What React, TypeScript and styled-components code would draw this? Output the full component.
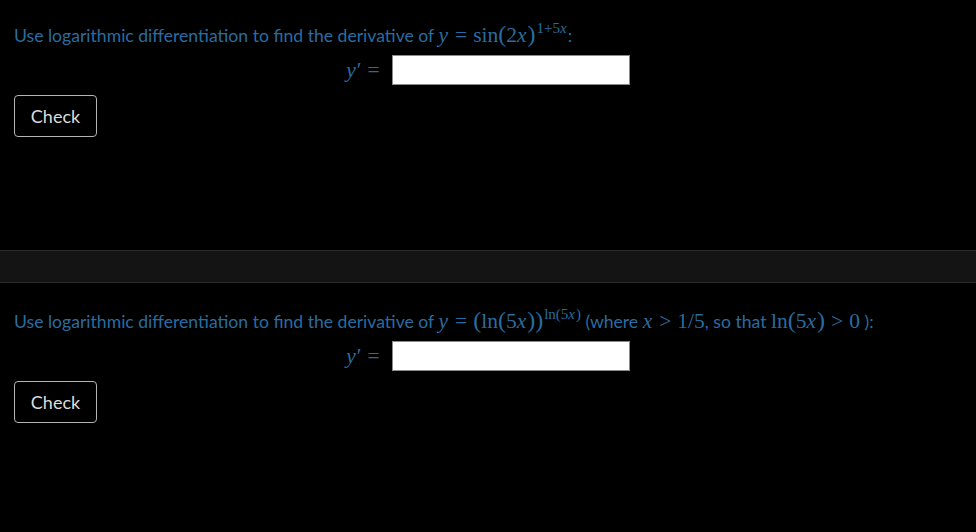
import React from 'react';
import styled, { createGlobalStyle } from 'styled-components';

const GlobalStyle = createGlobalStyle`
  html, body {
    margin: 0;
    padding: 0;
    background: #000;
  }
  body {
    font-family: Lato, "Open Sans", sans-serif;
  }
`;

const Page = styled.div`
  width: 976px;
  height: 532px;
  overflow: hidden;
  background: #000;
`;

const Problem = styled.section<{ $top: number; $height: number }>`
  height: ${(p) => p.$height}px;
  box-sizing: border-box;
  padding: ${(p) => p.$top}px 14px 0;
`;

const Question = styled.p`
  margin: 0;
  height: 24px;
  line-height: 24px;
  font-size: 17.6px;
  color: #2a6ca1;
  white-space: nowrap;
`;

const Math = styled.span`
  font-family: "Liberation Serif", "DejaVu Serif", serif;
  font-size: 21.5px;
`;

const V = styled.i`
  font-style: italic;
  margin-right: 1px;
`;

const Op = styled.span`
  margin: 0 6px;
`;

const Sup = styled.sup`
  font-size: 15px;
  vertical-align: 9px;
  line-height: 0;
  margin-left: 1px;
`;

const Paren = styled.span`
  font-size: 24px;
`;

const Display = styled.div`
  margin-top: 9px;
  display: flex;
  justify-content: center;
  align-items: center;
  gap: 6px;
  height: 30px;
`;

const Lhs = styled.span`
  font-family: "Liberation Serif", "DejaVu Serif", serif;
  font-size: 21.5px;
  color: #2a6ca1;
`;

const Answer = styled.input`
  width: 238px;
  height: 30px;
  box-sizing: border-box;
  border: 1px solid #8a8a8a;
  background: #fff;
  margin: 0;
  padding: 0 6px;
`;

const CheckButton = styled.button`
  margin-top: 10px;
  width: 83px;
  height: 42px;
  box-sizing: border-box;
  background: #000;
  color: #dcdcdc;
  border: 1px solid #b4b4b4;
  border-radius: 4px;
  font-family: Lato, "Open Sans", sans-serif;
  font-size: 18px;
  cursor: pointer;
`;

const Divider = styled.div`
  height: 33px;
  box-sizing: border-box;
  background: #141414;
  border-top: 1px solid #2c2c2c;
  border-bottom: 1px solid #2c2c2c;
`;

const App = () => (
  <Page>
    <GlobalStyle />
    <Problem $top={22} $height={250}>
      <Question>
        Use logarithmic differentiation to find the derivative of{' '}
        <Math>
          <V>y</V>
          <Op>=</Op>sin<Paren>(</Paren>2<V>x</V>
          <Paren>)</Paren>
          <Sup>
            1+5<V>x</V>
          </Sup>
        </Math>
        :
      </Question>
      <Display>
        <Lhs>
          <V>y</V>′<Op>=</Op>
        </Lhs>
        <Answer type="text" />
      </Display>
      <CheckButton>Check</CheckButton>
    </Problem>
    <Divider />
    <Problem $top={25} $height={249}>
      <Question>
        Use logarithmic differentiation to find the derivative of{' '}
        <Math>
          <V>y</V>
          <Op>=</Op>
          <Paren>(</Paren>ln<Paren>(</Paren>5<V>x</V>
          <Paren>))</Paren>
          <Sup>
            ln(5<V>x</V>)
          </Sup>
        </Math>{' '}
        (where{' '}
        <Math>
          <V>x</V>
          <Op>&gt;</Op>1/5
        </Math>
        , so that{' '}
        <Math>
          ln<Paren>(</Paren>5<V>x</V>
          <Paren>)</Paren>
          <Op>&gt;</Op>0
        </Math>{' '}
        ):
      </Question>
      <Display>
        <Lhs>
          <V>y</V>′<Op>=</Op>
        </Lhs>
        <Answer type="text" />
      </Display>
      <CheckButton>Check</CheckButton>
    </Problem>
  </Page>
);

export default App;
